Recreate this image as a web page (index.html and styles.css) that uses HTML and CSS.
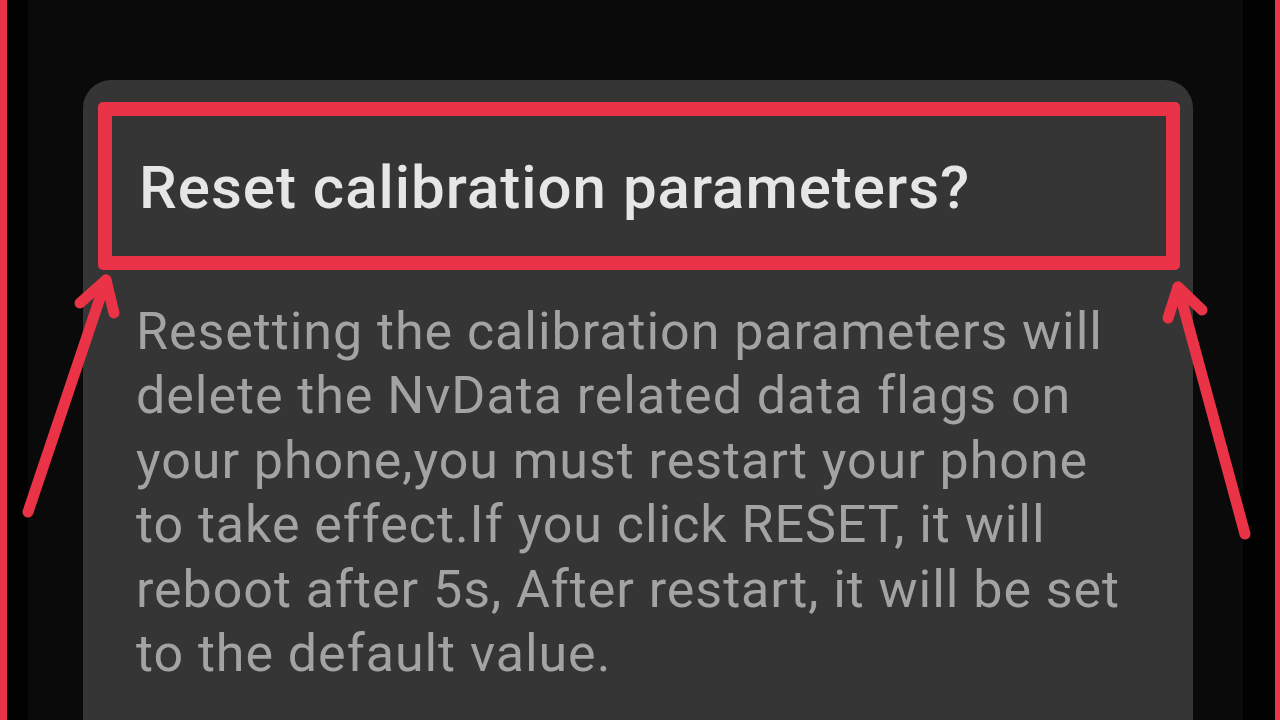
FILE: index.html
```html
<!DOCTYPE html>
<html lang="en">
<head>
<meta charset="utf-8">
<title>Reset calibration parameters?</title>
<link rel="stylesheet" href="styles.css">
</head>
<body>
<div class="frame">
  <div class="edge edge-red"></div>
  <div class="edge edge-black"></div>
  <main class="stage">
    <section class="dialog">
      <div class="highlight">
        <h1 class="title">Reset calibration parameters?</h1>
      </div>
      <p class="message">
        <span class="line">Resetting the calibration parameters will</span>
        <span class="line">delete the NvData related data flags on</span>
        <span class="line">your phone,you must restart your phone</span>
        <span class="line">to take effect.If you click RESET, it will</span>
        <span class="line">reboot after 5s, After restart, it will be set</span>
        <span class="line">to the default value.</span>
      </p>
    </section>
  </main>
  <div class="edge edge-black edge-black-right"></div>
  <div class="edge edge-red edge-red-right"></div>
</div>
<svg class="arrows" width="1280" height="720" viewBox="0 0 1280 720" aria-hidden="true">
  <g fill="none" stroke="#eb3347" stroke-width="11" stroke-linecap="round" stroke-linejoin="round">
    <path d="M28 512 L106 280"/>
    <path d="M80 303 L106 280 L114 313"/>
    <path d="M1245 534 L1178 287"/>
    <path d="M1168 318 L1178 287 L1202 310"/>
  </g>
</svg>
</body>
</html>
```
FILE: styles.css
```css
html, body {
  margin: 0;
  padding: 0;
  width: 1280px;
  height: 720px;
  overflow: hidden;
  background: #0a0a0a;
  font-family: Roboto, "Liberation Sans", Arial, sans-serif;
}

.frame {
  display: flex;
  width: 1280px;
  height: 720px;
}

.edge {
  flex: none;
  height: 100%;
}

.edge-red {
  width: 7px;
  background: #eb3347;
}

.edge-red-right {
  width: 5px;
}

.edge-black {
  width: 21px;
  background: #020202;
}

.edge-black-right {
  width: 32px;
}

.stage {
  flex: 1;
  background: #0a0a0a;
  padding-top: 80px;
  padding-left: 55px;
  overflow: hidden;
}

.dialog {
  width: 1110px;
  min-height: 700px;
  background: #353535;
  border-radius: 28px;
  padding: 22px 13px 0 15px;
  box-sizing: border-box;
}

.highlight {
  border: 14px solid #eb3347;
  border-radius: 5px;
  padding: 36px 20px 32px 27px;
}

.title {
  margin: 0;
  font-size: 60px;
  line-height: 72px;
  font-weight: 500;
  letter-spacing: 1px;
  color: #e6e6e6;
  white-space: nowrap;
}

.message {
  margin: 30px 0 0 38px;
  font-size: 52px;
  line-height: 64.4px;
  font-weight: 400;
  letter-spacing: 0.95px;
  color: #a3a3a3;
}

.line {
  display: block;
  white-space: nowrap;
}

.arrows {
  position: absolute;
  left: 0;
  top: 0;
  pointer-events: none;
}
```
